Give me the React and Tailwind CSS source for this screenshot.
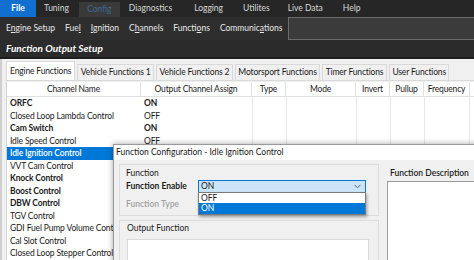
import React from 'react';

const font = { fontFamily: 'Lato, "Noto Sans", sans-serif' };

const rows = [
  { name: 'ORFC', value: 'ON', bold: true },
  { name: 'Closed Loop Lambda Control', value: 'OFF' },
  { name: 'Cam Switch', value: 'ON', bold: true },
  { name: 'Idle Speed Control', value: 'OFF' },
  { name: 'Idle Ignition Control', value: 'OFF', selected: true },
  { name: 'VVT Cam Control', value: 'OFF' },
  { name: 'Knock Control', value: 'ON', bold: true },
  { name: 'Boost Control', value: 'ON', bold: true },
  { name: 'DBW Control', value: 'ON', bold: true },
  { name: 'TGV Control', value: 'OFF' },
  { name: 'GDI Fuel Pump Volume Control', value: 'OFF' },
  { name: 'Cal Slot Control', value: 'OFF' },
  { name: 'Closed Loop Stepper Control', value: 'OFF' },
];

const tabs = ['Vehicle Functions 1', 'Vehicle Functions 2', 'Motorsport Functions', 'Timer Functions', 'User Functions'];

const cols = 'grid grid-cols-[134px_111px_34px_70px_34px_34px_46px]';

const App = () => {
  return (
    <div className="relative w-[474px] h-[260px] overflow-hidden bg-[#f0f0f0] text-[8.5px] whitespace-nowrap" style={font}>
      {/* Top menu */}
      <div className="flex h-[17px] bg-[#262626] text-[#d8d8d8] text-[8.5px] items-stretch">
        <div className="w-[36px] bg-[#1170cf] text-white font-bold flex items-center justify-center">File</div>
        <div className="pl-[8px] pr-[10px] flex items-center">Tuning</div>
        <div className="mt-[2px] w-[41px] bg-[#3a3a3a] text-[#3d6a94] flex items-center justify-center">Config</div>
        <div className="pl-[9px] pr-[22px] flex items-center">Diagnostics</div>
        <div className="pr-[20px] flex items-center">Logging</div>
        <div className="pr-[18px] flex items-center">Utilites</div>
        <div className="pr-[20px] flex items-center">Live Data</div>
        <div className="flex items-center">Help</div>
      </div>

      {/* Ribbon row */}
      <div className="flex h-[23px] bg-[#2e2e2e] text-[#e8e8e8] text-[8.5px]">
        <div className="flex items-center gap-[10px] pl-[6px] pr-[5px] border-r border-[#6c6c6c]">
          <span>E<span className="underline">n</span>gine Setup</span>
          <span>Fue<span className="underline">l</span></span>
          <span><span className="underline">I</span>gnition</span>
          <span>C<span className="underline">h</span>annels</span>
          <span>Functi<span className="underline">o</span>ns</span>
          <span>Communic<span className="underline">a</span>tions</span>
        </div>
        <div className="flex-1 bg-[#3b3b3b] border-y border-[#6c6c6c]" />
      </div>

      {/* Title row */}
      <div className="h-[19px] bg-[#2b2b2b] text-white font-bold italic text-[10px] flex items-center pl-[6px] border-b-[2px] border-[#1e1e1e]">
        Function Output Setup
      </div>

      {/* Panel */}
      <div className="pl-[4px] pt-[3px] border-l-[2px] border-[#cfcfcf] tracking-[-0.15px]">
        <div className="flex items-end h-[19px] border-b border-[#d9d9d9]">
          <div className="h-[19px] px-[3px] bg-white border border-b-0 border-[#d9d9d9] flex items-center text-[#1a1a1a]">
            Engine Functions
          </div>
          {tabs.map((t) => (
            <div key={t} className="h-[16px] ml-[2px] px-[2.5px] bg-[#f0f0f0] border border-b-0 border-[#d9d9d9] flex items-center text-[#1a1a1a]">
              {t}
            </div>
          ))}
        </div>

        <div className="mt-[1px] bg-white border-l border-[#d0d0d0] text-[#1a1a1a]">
          <div className={`${cols} h-[15px] border-b border-[#e0e0e0]`}>
            {['Channel Name', 'Output Channel Assign', 'Type', 'Mode', 'Invert', 'Pullup', 'Frequency'].map((h) => (
              <div key={h} className="flex items-center justify-center border-r border-[#e0e0e0] overflow-hidden">
                {h}
              </div>
            ))}
          </div>
          {rows.map((r) => (
            <div key={r.name} className={`${cols} h-[12.5px]`}>
              <div
                className={`pl-[3px] flex items-center overflow-hidden ${
                  r.selected ? 'bg-[#0078d7] text-white font-semibold' : ''
                } ${r.bold ? 'font-bold' : ''}`}
              >
                {r.name}
              </div>
              <div className={`pl-[3px] flex items-center ${r.bold ? 'font-bold' : ''}`}>{r.value}</div>
              <div className="border-l border-[#e8e8e8]" />
              <div className="border-l border-[#e8e8e8]" />
              <div className="border-l border-[#e8e8e8]" />
              <div className="border-l border-[#e8e8e8]" />
              <div className="border-l border-[#e8e8e8] border-r" />
            </div>
          ))}
        </div>
      </div>

      {/* Dialog window */}
      <div className="absolute left-[113px] top-[144px] w-[380px] h-[130px] bg-[#f0f0f0] border-l border-t border-[#9a9a9a] shadow-[0_0_6px_rgba(0,0,0,0.35)] text-[#1a1a1a]">
        <div className="h-[15px] bg-white flex items-center pl-[2px]">
          Function Configuration - Idle Ignition Control
        </div>
        <div className="flex gap-[8px] pl-[5px] pt-[4px]">
          <div className="flex flex-col gap-[4px] w-[260px]">
            <div className="h-[52px] border border-[#dcdcdc] pl-[6px] pt-[3px]">
              <div className="leading-[11px]">Function</div>
              <div className="flex items-center mt-[1px]">
                <span className="w-[72px] font-bold">Function Enable</span>
                <div className="relative w-[168px]">
                  <div className="h-[13px] bg-[#cce4f7] border border-[#0078d7] flex items-center justify-between pl-[2px] pr-[4px]">
                    <span>ON</span>
                    <svg width="7" height="5" viewBox="0 0 7 5" fill="none" stroke="#606060" strokeWidth="1">
                      <path d="M0.5 0.8 L3.5 3.8 L6.5 0.8" />
                    </svg>
                  </div>
                  <div className="absolute left-0 top-[12px] w-[168px] bg-white border border-[#7a7a7a] shadow-[1px_2px_3px_rgba(0,0,0,0.35)] z-10">
                    <div className="h-[10px] flex items-center pl-[2px]">OFF</div>
                    <div className="h-[11px] flex items-center pl-[2px] bg-[#0078d7] text-white">ON</div>
                  </div>
                </div>
              </div>
              <div className="mt-[5px] text-[#a0a0a0] font-semibold">Function Type</div>
            </div>
            <div className="h-[60px] border border-[#dcdcdc] pl-[7px] pt-[2px]">
              <div className="leading-[11px]">Output Function</div>
              <div className="mt-[5px] mr-[9px] h-[40px] bg-white border border-[#dadada]" />
            </div>
          </div>
          <div className="flex flex-col pt-[3px]">
            <div className="pl-[3px] font-semibold">Function Description</div>
            <div className="mt-[1px] w-[100px] h-[90px] bg-white border border-[#9a9a9a]" />
          </div>
        </div>
      </div>
    </div>
  );
};

export default App;
